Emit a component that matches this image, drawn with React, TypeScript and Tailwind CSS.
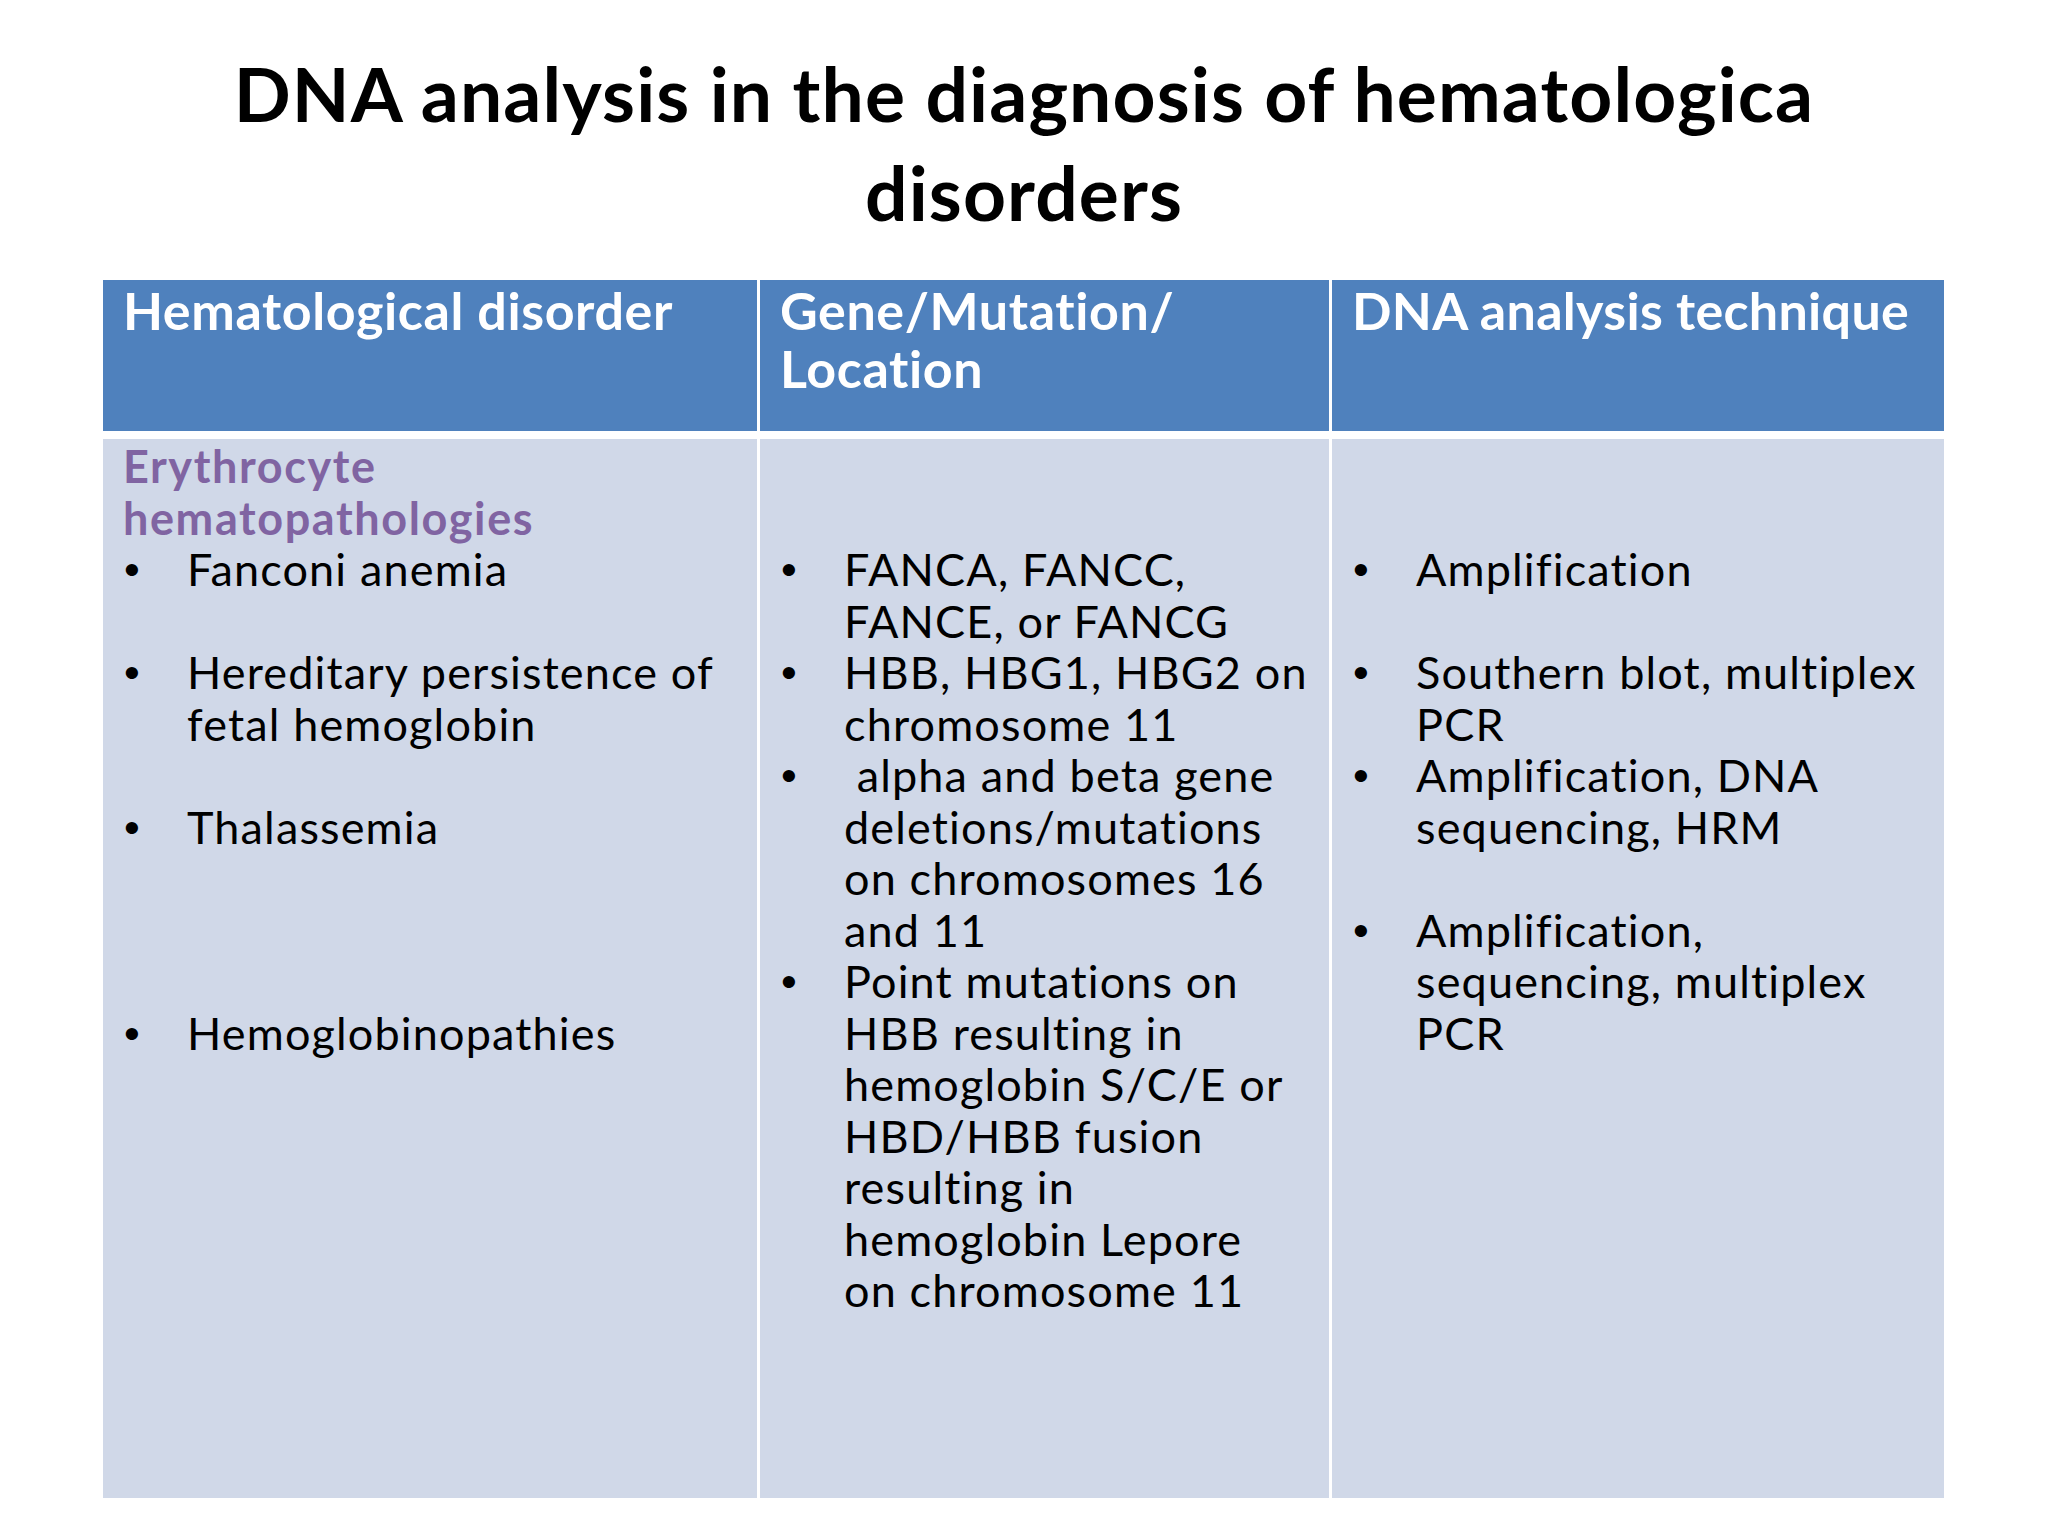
import React from "react";

type Item =
  | { kind: "blank" }
  | { kind: "purple"; text: string }
  | { kind: "bullet"; lines: string[] };

const col1: Item[] = [
  { kind: "purple", text: "Erythrocyte" },
  { kind: "purple", text: "hematopathologies" },
  { kind: "bullet", lines: ["Fanconi anemia"] },
  { kind: "blank" },
  { kind: "bullet", lines: ["Hereditary persistence of", "fetal hemoglobin"] },
  { kind: "blank" },
  { kind: "bullet", lines: ["Thalassemia"] },
  { kind: "blank" },
  { kind: "blank" },
  { kind: "blank" },
  { kind: "bullet", lines: ["Hemoglobinopathies"] },
];

const col2: Item[] = [
  { kind: "blank" },
  { kind: "blank" },
  { kind: "bullet", lines: ["FANCA, FANCC,", "FANCE, or FANCG"] },
  { kind: "bullet", lines: ["HBB, HBG1, HBG2 on", "chromosome 11"] },
  {
    kind: "bullet",
    lines: ["\u00a0alpha and beta gene", "deletions/mutations", "on chromosomes 16", "and 11"],
  },
  {
    kind: "bullet",
    lines: [
      "Point mutations on",
      "HBB resulting in",
      "hemoglobin S/C/E or",
      "HBD/HBB fusion",
      "resulting in",
      "hemoglobin Lepore",
      "on chromosome 11",
    ],
  },
];

const col3: Item[] = [
  { kind: "blank" },
  { kind: "blank" },
  { kind: "bullet", lines: ["Amplification"] },
  { kind: "blank" },
  { kind: "bullet", lines: ["Southern blot, multiplex", "PCR"] },
  { kind: "bullet", lines: ["Amplification, DNA", "sequencing, HRM"] },
  { kind: "blank" },
  { kind: "bullet", lines: ["Amplification,", "sequencing, multiplex", "PCR"] },
];

function Cell({ items }: { items: Item[] }) {
  return (
    <div className="h-[1059px] bg-[#d0d8e8] pt-[2px] text-[45px] leading-[51.5px] text-black">
      {items.map((it, i) => {
        if (it.kind === "blank") return <div key={i} className="h-[51.5px]" />;
        if (it.kind === "purple")
          return (
            <div
              key={i}
              className="pl-[20px] font-bold text-[#8064a2] whitespace-nowrap tracking-[1.6px]"
            >
              {it.text}
            </div>
          );
        return (
          <div key={i} className="flex">
            <div className="w-[84px] shrink-0 pl-[21px] font-['Liberation_Sans',Arial,sans-serif]">
              •
            </div>
            <div className="whitespace-pre tracking-[1.15px]">
              {it.lines.map((l, j) => (
                <div key={j}>{l}</div>
              ))}
            </div>
          </div>
        );
      })}
    </div>
  );
}

export default function App() {
  return (
    <div className="w-[2048px] h-[1536px] bg-white font-['Lato','Carlito',sans-serif] overflow-hidden">
      <h1 className="pt-[44px] text-center font-bold text-[75px] leading-[98.5px] tracking-[1.1px] text-black">
        DNA analysis in the diagnosis of hematologica
        <br />
        disorders
      </h1>
      <div className="mt-[39px] ml-[103px] w-[1841px] grid grid-cols-[654px_569px_612px] gap-x-[3px] gap-y-[8px] bg-white">
        <div className="h-[151px] bg-[#4f81bd] pt-[2px] px-[20px] text-white font-bold text-[52px] leading-[57.5px] tracking-[0.6px] whitespace-nowrap">
          Hematological disorder
        </div>
        <div className="h-[151px] bg-[#4f81bd] pt-[2px] px-[20px] text-white font-bold text-[52px] leading-[57.5px] tracking-[0.6px]">
          Gene/Mutation/
          <br />
          Location
        </div>
        <div className="h-[151px] bg-[#4f81bd] pt-[2px] px-[20px] text-white font-bold text-[52px] leading-[57.5px] tracking-[0.3px] whitespace-nowrap">
          DNA analysis technique
        </div>
        <Cell items={col1} />
        <Cell items={col2} />
        <Cell items={col3} />
      </div>
    </div>
  );
}
